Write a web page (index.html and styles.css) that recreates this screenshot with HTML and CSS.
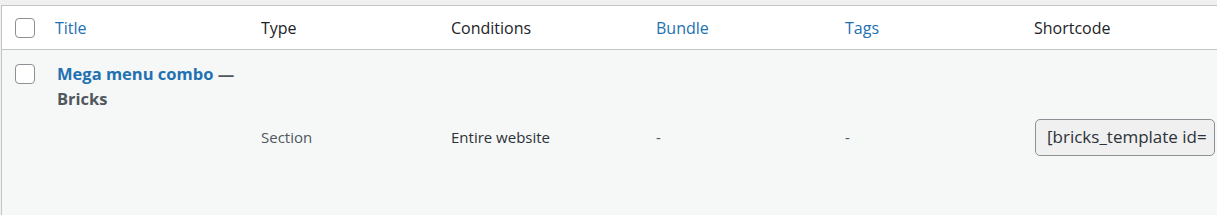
FILE: index.html
```html
<!DOCTYPE html>
<html lang="en">
<head>
<meta charset="utf-8">
<title>Templates</title>
<link rel="stylesheet" href="styles.css">
</head>
<body>
<div class="wrap">
  <table class="list">
    <colgroup>
      <col class="c-cb">
      <col class="c-title">
      <col class="c-type">
      <col class="c-cond">
      <col class="c-bundle">
      <col class="c-tags">
      <col class="c-short">
    </colgroup>
    <thead>
      <tr>
        <td class="cb"><span class="check"></span></td>
        <th class="link">Title</th>
        <th>Type</th>
        <th>Conditions</th>
        <th class="link">Bundle</th>
        <th class="link">Tags</th>
        <th>Shortcode</th>
      </tr>
    </thead>
    <tbody>
      <tr class="row">
        <td class="cb top"><span class="check"></span></td>
        <td class="top title"><a class="row-title">Mega menu combo</a><span class="state"> — <br>Bricks</span></td>
        <td class="muted">Section</td>
        <td class="dark">Entire website</td>
        <td class="muted">-</td>
        <td class="muted">-</td>
        <td><div class="code">[bricks_template id=</div></td>
      </tr>
    </tbody>
  </table>
</div>
</body>
</html>
```
FILE: styles.css
```css
html, body {
  margin: 0;
  padding: 0;
  background: #f0f0f1;
  overflow: hidden;
}
body {
  font-family: "Open Sans", "Noto Sans", sans-serif;
  color: #3c434a;
}
.wrap {
  padding: 5px 0 0 1px;
}
.list {
  border: 1px solid #c3c4c7;
  border-collapse: separate;
  border-spacing: 0;
  table-layout: fixed;
  width: 1400px;
  background: #fff;
}
.c-cb { width: 41px; }
.c-title { width: 206px; }
.c-type { width: 190px; }
.c-cond { width: 205px; }
.c-bundle { width: 189px; }
.c-tags { width: 189px; }
.c-short { width: 380px; }

thead th, thead td {
  height: 43px;
  padding: 0 12px;
  text-align: left;
  font-weight: 400;
  font-size: 16px;
  color: #1d2327;
  border-bottom: 1px solid #c3c4c7;
  vertical-align: middle;
}
thead th.link { color: #2271b1; }
thead td.cb, tbody td.cb {
  padding: 0 0 0 13px;
}
.check {
  display: block;
  width: 18px;
  height: 18px;
  border: 1px solid #8c8f94;
  border-radius: 4px;
  background: #fff;
}
tbody .row { background: #f6f7f7; height: 174px; }
tbody td {
  padding: 0 12px;
  font-size: 15px;
  vertical-align: middle;
}
tbody td.top { vertical-align: top; }
tbody td.cb .check { margin-top: 14px; }
tbody td.title {
  padding: 11px 6px 0 14px;
  font-size: 16.5px;
  line-height: 25px;
  font-weight: 700;
}
.row-title { color: #2271b1; }
.state { color: #50575e; }
.muted { color: #50575e; }
.dark { color: #2c3338; }
.code {
  width: 180px;
  height: 37px;
  margin: 1px 0 0 1px;
  box-sizing: border-box;
  border: 1px solid #8c8f94;
  border-radius: 5px;
  background: #f0f0f1;
  color: #2c3338;
  font-size: 17px;
  line-height: 34px;
  padding: 0 0 0 11px;
  white-space: nowrap;
  overflow: hidden;
}
```
